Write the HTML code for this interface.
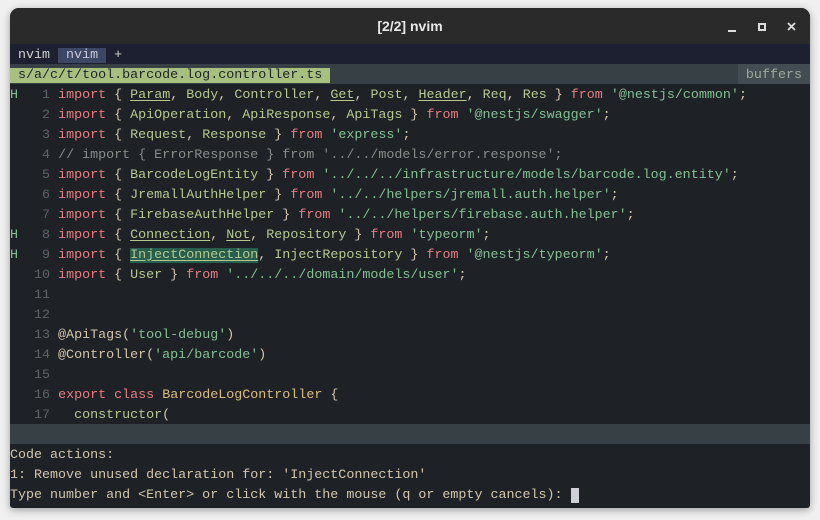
<!DOCTYPE html>
<html><head><meta charset="utf-8"><style>
*{margin:0;padding:0;box-sizing:border-box}
body{width:820px;height:520px;background:#f0f0f0;overflow:hidden;position:relative}
.win{position:absolute;left:10px;top:8px;width:800px;height:500px;background:#1e2227;border-radius:9px 9px 3px 3px;overflow:hidden;box-shadow:0 2px 8px rgba(0,0,0,.35)}
.title{height:36px;background:#2a2a2a;color:#e8e8e8;font:bold 14px "Liberation Sans",sans-serif;text-align:center;line-height:36px;position:relative}
.t{font-family:"Liberation Mono",monospace;font-size:13.35px;white-space:pre;position:absolute;left:0;width:800px;height:20px;line-height:20px;padding-top:2px;overflow:hidden;color:#d3c6aa}
.k{color:#e67e80}.i{color:#b5c98e}.s{color:#83c092}.c{color:#868d8a}.n{color:#5d6566}.y{color:#dbbc7f}.p{color:#d8ccb0}.h{color:#83c092}
.u{text-decoration:underline;text-underline-offset:2px}
</style></head><body>
<div class="win">
<div class="title">[2/2] nvim
<span style="position:absolute;left:718px;top:22px;width:8px;height:2px;background:#ddd"></span>
<span style="position:absolute;left:748px;top:15px;width:8px;height:8px;border:2px solid #ddd"></span>
<svg style="position:absolute;left:777px;top:14px" width="9" height="9" viewBox="0 0 9 9"><path d="M1 1L8 8M8 1L1 8" stroke="#ddd" stroke-width="1.8"/></svg>
</div>
<div class="t" style="top:36px;background:#1c2030;color:#d0d0d0"> nvim <span style="background:#3c4766;color:#c8c8d8"> nvim </span> +</div>
<div class="t" style="top:56px;background:#374145"><span style="background:#a7c080;color:#1e2227"> s/a/c/t/tool.barcode.log.controller.ts </span><span style="position:absolute;right:0;top:0;height:20px;padding-top:2px;background:#434c50;color:#9da9a0"> buffers </span></div>
<div class="t" style="top:76px"><span class="h">H</span>   <span class="n">1</span> <span class="k">import</span> <span class="p">{</span> <span class="i u">Param</span><span class="p">,</span> <span class="i">Body</span><span class="p">,</span> <span class="i">Controller</span><span class="p">,</span> <span class="i u">Get</span><span class="p">,</span> <span class="i">Post</span><span class="p">,</span> <span class="i u">Header</span><span class="p">,</span> <span class="i">Req</span><span class="p">,</span> <span class="i">Res</span> <span class="p">}</span> <span class="k">from</span> <span class="s">'@nestjs/common'</span><span class="p">;</span></div>
<div class="t" style="top:96px">    <span class="n">2</span> <span class="k">import</span> { <span class="i">ApiOperation</span>, <span class="i">ApiResponse</span>, <span class="i">ApiTags</span> } <span class="k">from</span> <span class="s">'@nestjs/swagger'</span>;</div>
<div class="t" style="top:116px">    <span class="n">3</span> <span class="k">import</span> { <span class="i">Request</span>, <span class="i">Response</span> } <span class="k">from</span> <span class="s">'express'</span>;</div>
<div class="t" style="top:136px">    <span class="n">4</span> <span class="c">// import { ErrorResponse } from '../../models/error.response';</span></div>
<div class="t" style="top:156px">    <span class="n">5</span> <span class="k">import</span> { <span class="i">BarcodeLogEntity</span> } <span class="k">from</span> <span class="s">'../../../infrastructure/models/barcode.log.entity'</span>;</div>
<div class="t" style="top:176px">    <span class="n">6</span> <span class="k">import</span> { <span class="i">JremallAuthHelper</span> } <span class="k">from</span> <span class="s">'../../helpers/jremall.auth.helper'</span>;</div>
<div class="t" style="top:196px">    <span class="n">7</span> <span class="k">import</span> { <span class="i">FirebaseAuthHelper</span> } <span class="k">from</span> <span class="s">'../../helpers/firebase.auth.helper'</span>;</div>
<div class="t" style="top:216px"><span class="h">H</span>   <span class="n">8</span> <span class="k">import</span> { <span class="i u">Connection</span>, <span class="i u">Not</span>, <span class="i">Repository</span> } <span class="k">from</span> <span class="s">'typeorm'</span>;</div>
<div class="t" style="top:236px"><span class="h">H</span>   <span class="n">9</span> <span class="k">import</span> { <span class="i u" style="background:#275e4e">InjectConnection</span>, <span class="i">InjectRepository</span> } <span class="k">from</span> <span class="s">'@nestjs/typeorm'</span>;</div>
<div class="t" style="top:256px">   <span class="n">10</span> <span class="k">import</span> { <span class="i">User</span> } <span class="k">from</span> <span class="s">'../../../domain/models/user'</span>;</div>
<div class="t" style="top:276px">   <span class="n">11</span></div>
<div class="t" style="top:296px">   <span class="n">12</span></div>
<div class="t" style="top:316px">   <span class="n">13</span> @ApiTags(<span class="s">'tool-debug'</span>)</div>
<div class="t" style="top:336px">   <span class="n">14</span> @Controller(<span class="s">'api/barcode'</span>)</div>
<div class="t" style="top:356px">   <span class="n">15</span></div>
<div class="t" style="top:376px">   <span class="n">16</span> <span class="k">export</span> <span class="k">class</span> <span class="y">BarcodeLogController</span> {</div>
<div class="t" style="top:396px">   <span class="n">17</span>   <span class="i">constructor</span>(</div>
<div class="t" style="top:416px;background:#374145"></div>
<div class="t" style="top:436px">Code actions:</div>
<div class="t" style="top:456px">1: Remove unused declaration for: 'InjectConnection'</div>
<div class="t" style="top:476px">Type number and &lt;Enter&gt; or click with the mouse (q or empty cancels): <span style="background:#d0d0d8"> </span></div>
</div>
</body></html>
